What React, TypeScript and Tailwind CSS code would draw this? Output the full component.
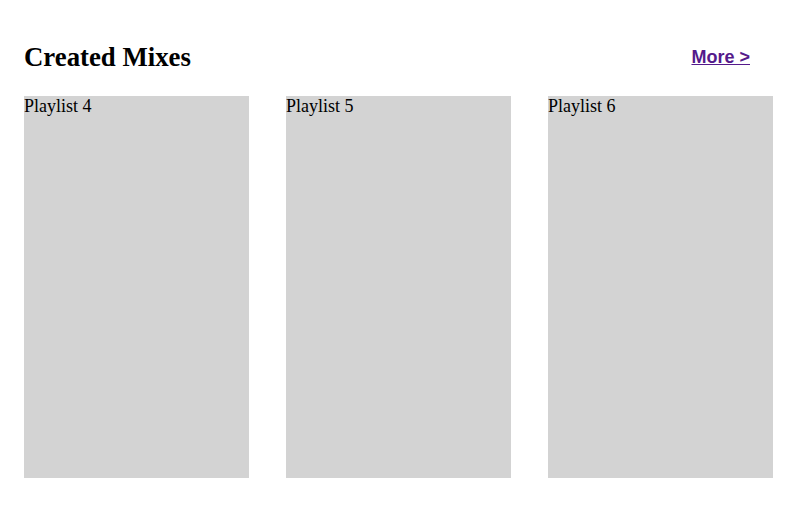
export default function App() {
  const playlists = ["Playlist 4", "Playlist 5", "Playlist 6"];
  return (
    <div className="bg-white min-h-[506px] px-6 pt-[43px] font-['Liberation_Serif',serif] text-black">
      <div className="flex items-center justify-between w-[749px]">
        <h2 className="m-0 text-[26.8px] font-bold leading-[29.5px]">Created Mixes</h2>
        <a href="#" className="mr-[23px] font-['Liberation_Sans',Arial,sans-serif] text-[18px] font-bold text-[#551a8b] underline">
          More &gt;
        </a>
      </div>
      <div className="mt-[23.5px] flex gap-[37px]">
        {playlists.map((name) => (
          <div key={name} className="w-[225px] h-[382px] bg-[#d3d3d3] text-[18px] leading-[21px]">
            {name}
          </div>
        ))}
      </div>
    </div>
  );
}
